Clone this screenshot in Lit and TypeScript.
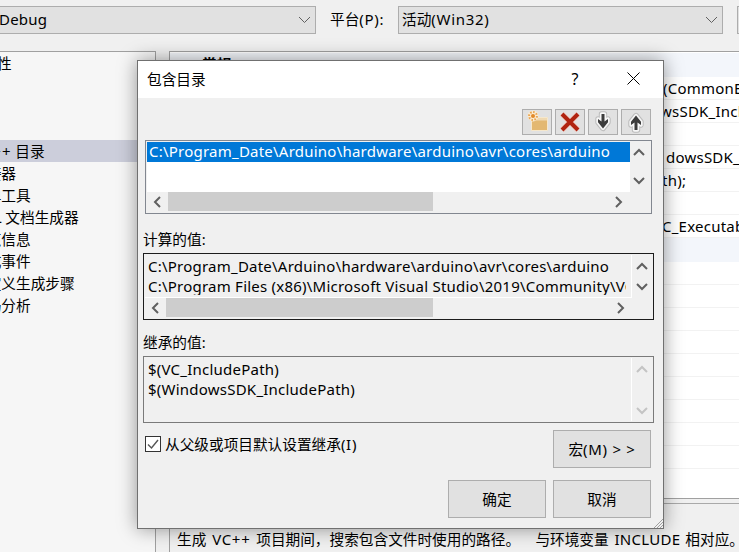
import { LitElement, html, css, svg } from "lit";
import { customElement } from "lit/decorators.js";

const chevron = (dir: "up" | "down" | "left" | "right", dim = false) => {
  const pts = {
    up: "1,7 6,2 11,7",
    down: "1,2 6,7 11,2",
    left: "7,1 2,6 7,11",
    right: "2,1 7,6 2,11",
  }[dir];
  const vertical = dir === "up" || dir === "down";
  return html`<svg class="chev" width=${vertical ? 12 : 9} height=${vertical ? 9 : 12} viewBox=${vertical ? "0 0 12 9" : "0 0 9 12"}>
    <polyline points=${pts} fill="none" stroke=${dim ? "#c4c4c4" : "#606060"} stroke-width="2"></polyline>
  </svg>`;
};

const comboChevron = html`<svg class="chev" width="13" height="8" viewBox="0 0 13 8">
  <polyline points="1,1 6.5,6.5 12,1" fill="none" stroke="#606060" stroke-width="1"></polyline>
</svg>`;

const downArrow = "M7.5 2h3v7.5l3.5-2.5v3.2L9 16.5l-5-6.3V7l3.5 2.5z";

const arrowIcon = (up: boolean) => html`<svg width="18" height="22" viewBox="0 0 18 22">
  <g transform=${up ? "translate(0 21) scale(1 -1)" : "translate(0 1)"}>
    <path d=${downArrow} fill="#bcbcbc" stroke="#bcbcbc" stroke-width="5.4" stroke-linejoin="round"></path>
    <path d=${downArrow} fill="#f6f6f6" stroke="#f6f6f6" stroke-width="3.4" stroke-linejoin="round"></path>
    <path d=${downArrow} fill="#3c3c3c"></path>
  </g>
</svg>`;

const treeRows = [
  { text: html`配置属性`, parent: true, gapBefore: 0 },
  { text: html`<span class="latin tight">VC++</span> 目录`, selected: true, gapBefore: 66 },
  { text: html`链接器` },
  { text: html`清单工具` },
  { text: html`XML 文档生成器` },
  { text: html`浏览信息` },
  { text: html`生成事件` },
  { text: html`自定义生成步骤` },
  { text: html`代码分析` },
];

const VALUE_X = 493;

const gridRows: { kind?: string; text: string; shift?: number }[] = [
  { kind: "header", text: "常规" },
  { text: "(CommonExecutablePath)" },
  { text: "wsSDK_IncludePath);", shift: -3 },
  { text: "" },
  { text: "dowsSDK_LibraryPath", shift: 3 },
  { text: "th);", shift: -1 },
  { text: "" },
  { text: "C_ExecutablePath", shift: -1 },
  { kind: "header", text: "" },
  { text: "" },
  { text: "" },
  { text: "" },
  { text: "" },
  { text: "" },
  { text: "" },
  { text: "" },
  { text: "" },
  { text: "" },
];

@customElement("app-root")
export class AppRoot extends LitElement {
  static styles = css`
    :host {
      display: block;
      position: relative;
      width: 739px;
      height: 552px;
      overflow: hidden;
      background: #f0f0f0;
      color: #000;
      font-family: "Noto Sans", "Noto Sans CJK SC", sans-serif;
      font-size: 14.67px;
      line-height: 20px;
    }
    .latin { font-size: 15px; letter-spacing: 0.23px; }
    .wide { letter-spacing: 0.7px; }
    .tight { letter-spacing: 1px; }
    .vc { margin: 0 2px; }
    .env { margin: 0 1px 0 2px; letter-spacing: 0.3px; }
    .after { margin-left: 8px; }
    .top {
      display: flex;
      align-items: center;
      height: 27px;
      padding-top: 6px;
      margin-left: -9px;
      white-space: nowrap;
    }
    .select {
      flex: none;
      box-sizing: border-box;
      height: 28px;
      display: flex;
      align-items: center;
      justify-content: space-between;
      padding: 0 4px 2px 3px;
      background: #e1e1e1;
      border: 1px solid #adadad;
    }
    .select .chev { margin-top: 2px; }
    .select.config { width: 325px; padding-left: 7px; }
    .select.platform { width: 325px; }
    .plat-label { flex: none; margin: 0 14px; width: 54px; padding-bottom: 2px; }
    .stub { flex: none; width: 40px; height: 28px; box-sizing: border-box; margin-left: 14px; background: #e1e1e1; border: 1px solid #adadad; }
    .panels {
      display: grid;
      grid-template-columns: 156px 1fr;
      column-gap: 13px;
      height: 501px;
      margin-top: 18px;
    }
    .tree {
      background: #f6f6f6;
      border: 1px solid #a0a0a0;
      border-left: none;
      border-bottom: none;
      overflow: hidden;
    }
    .tree-row {
      height: 22px;
      line-height: 22px;
      white-space: nowrap;
    }
    .tree-row > span { display: inline-block; margin-left: -28px; }
    .tree-row.parent > span { margin-left: -47px; }
    .tree-row.selected { background: #cccedb; }
    .detail {
      display: flex;
      flex-direction: column;
      border-left: 1px solid #a0a0a0;
      border-top: 1px solid #a0a0a0;
      min-width: 0;
    }
    .grid {
      height: 446px;
      flex: none;
      background: #fff;
      overflow: hidden;
      padding-top: 1px;
      box-sizing: border-box;
    }
    .g-row {
      height: 23px;
      box-sizing: border-box;
      line-height: 22px;
      border-bottom: 1px solid #f2f2f2;
      white-space: nowrap;
    }
    .g-row.header {
      height: 24px;
      background: #f3f6fb;
      border-bottom: none;
      font-weight: 700;
    }
    .desc {
      flex: 1;
      border-top: 1px solid #a0a0a0;
      padding-top: 4px;
    }
    .desc-inner {
      border-top: 1px solid #a9a9a9;
      padding: 25px 0 0 7px;
      white-space: nowrap;
    }
    .dialog {
      position: absolute;
      left: 137px;
      top: 60px;
      width: 527px;
      height: 469px;
      box-sizing: border-box;
      border: 1px solid #707070;
      background: #f0f0f0;
      box-shadow: 0 0 18px rgba(0, 0, 0, 0.4);
      display: flex;
      flex-direction: column;
    }
    .titlebar {
      height: 37px;
      box-sizing: border-box;
      flex: none;
      background: #fff;
      display: flex;
      align-items: center;
      padding: 0 1px 2px 9px;
    }
    .titlebar .title { flex: 1; }
    .help { width: 58px; text-align: center; font-size: 16px; }
    .close { width: 58px; display: flex; justify-content: center; }
    .body {
      flex: 1;
      padding: 11px 9px 0 5px;
      display: flex;
      flex-direction: column;
    }
    .tools {
      display: flex;
      justify-content: flex-end;
      gap: 3px;
      padding-right: 3px;
    }
    .tool {
      width: 30px;
      height: 26px;
      box-sizing: border-box;
      background: #e1e1e1;
      border: 1px solid #adadad;
      display: flex;
      align-items: center;
      justify-content: center;
    }
    .box {
      box-sizing: border-box;
      border: 1px solid #828790;
      padding: 1px;
      display: grid;
      grid-template-columns: 1fr 20px;
      background: #f0f0f0;
    }
    .box.edit { margin: 5px 2px 0; height: 74px; grid-template-rows: 50px 20px; }
    .box.calc { height: 67px; border-color: #1c1c1c; grid-template-rows: 43px 20px; }
    .box.inherit { height: 67px; border-color: #7a7a7a; grid-template-rows: 63px; }
    .content { overflow: hidden; white-space: nowrap; min-width: 0; }
    .edit .content { background: #fff; }
    .readonly { border-right: 1px solid #fff; border-bottom: 1px solid #fff; padding: 1px 0 0 3px; }
    .readonly div { height: 19.5px; line-height: 20px; overflow: hidden; margin-right: 5px; }
    .inherit .readonly { border-bottom: none; padding-top: 1px; }
    .sel {
      height: 20px;
      line-height: 19px;
      background: #0078d7;
      color: #fff;
      padding-left: 2px;
    }
    .vbar {
      display: flex;
      flex-direction: column;
      justify-content: space-between;
    }
    .calc .vbar { padding: 1px 0 2px; }
    .inherit .vbar { padding: 1px 0; }
    .edit .vbar { padding: 0 0 2px; margin-left: -1px; }
    .arrow { width: 20px; height: 20px; display: flex; align-items: center; justify-content: center; flex: none; }
    .hbar { display: flex; height: 20px; min-width: 0; padding-right: 2px; }
    .thumb { height: 19px; background: #cdcdcd; flex: none; }
    .hbar .spacer { flex: 1; }
    .chev { display: block; }
    .cap {
      height: 20px;
      line-height: 20px;
      margin: 15px 0 4px;
    }
    .cap.second { margin-top: 12px; }
    .macro-row {
      display: flex;
      justify-content: space-between;
      align-items: flex-start;
      margin-top: 7px;
      padding: 0 3px 0 2px;
    }
    .check { display: flex; align-items: center; gap: 4px; margin-top: 6px; height: 16px; line-height: 15px; }
    .box-check {
      width: 16px;
      height: 16px;
      box-sizing: border-box;
      border: 1px solid #333;
      background: #fff;
      display: flex;
      align-items: center;
      justify-content: center;
    }
    .btn {
      width: 98px;
      height: 38px;
      box-sizing: border-box;
      background: #e1e1e1;
      border: 1px solid #adadad;
      display: flex;
      align-items: center;
      justify-content: center;
      white-space: pre;
    }
    .footer {
      display: flex;
      justify-content: flex-end;
      gap: 7px;
      margin-top: 12px;
      padding-right: 3px;
    }
    .grip { position: absolute; right: 0; bottom: 0; display: block; }
  `;

  private hbar(thumb: number) {
    return html`<div class="hbar">
      <div class="arrow">${chevron("left")}</div>
      <div class="thumb" style="width:${thumb}px;margin-left:1px"></div>
      <div class="spacer"></div>
      <div class="arrow">${chevron("right")}</div>
    </div>`;
  }

  render() {
    return html`
      <div class="top">
        <div class="select config"><span class="latin">Debug</span>${comboChevron}</div>
        <div class="plat-label">平台<span class="latin wide">(P):</span></div>
        <div class="select platform"><span>活动<span class="latin wide">(Win32)</span></span>${comboChevron}</div>
        <div class="stub"></div>
      </div>
      <div class="panels">
        <div class="tree">
          ${treeRows.map(
            (r) => html`<div
              class="tree-row ${r.parent ? "parent" : ""} ${r.selected ? "selected" : ""}"
              style=${r.gapBefore ? `margin-top:${r.gapBefore}px` : ""}
            ><span>${r.text}</span></div>`
          )}
        </div>
        <div class="detail">
          <div class="grid">
            ${gridRows.map(
              (r) => html`<div
                class="g-row ${r.kind === "header" ? "header" : "latin"}"
                style="padding-left:${r.kind === "header" ? 32 : VALUE_X + (r.shift ?? 0)}px"
              >${r.text}</div>`
            )}
          </div>
          <div class="desc">
            <div class="desc-inner">生成 <span class="latin wide vc">VC++</span> 项目期间，搜索包含文件时使用的路径。\u3000<span class="after">与环境变量</span> <span class="latin env">INCLUDE</span> 相对应。</div>
          </div>
        </div>
      </div>

      <div class="dialog">
        <div class="titlebar">
          <div class="title">包含目录</div>
          <div class="help">?</div>
          <div class="close">
            <svg width="13" height="13" viewBox="0 0 13 13"><path d="M.5.5l12 12M12.5.5l-12 12" stroke="#000" fill="none"></path></svg>
          </div>
        </div>
        <div class="body">
          <div class="tools">
            <div class="tool">
              <svg width="26" height="24" viewBox="0 0 26 24">
                <path d="M7.5 7.5h16v13h-16z" fill="#e3b871" stroke="#f6e8cd"></path>
                <path d="M8 8h15v2.5H8z" fill="#efd9b2"></path>
                <circle cx="9" cy="6" r="5.4" fill="#f9ecd4"></circle>
                <circle cx="9" cy="6" r="3.9" fill="none" stroke="#eaa552" stroke-width="2" stroke-dasharray="1.6 1.4"></circle>
                <circle cx="9" cy="6" r="2" fill="#e38a27"></circle>
              </svg>
            </div>
            <div class="tool">
              <svg width="24" height="24" viewBox="0 0 24 24">
                <path d="M4 4l16 16M20 4L4 20" stroke="#ecd6cf" stroke-width="6.4" fill="none"></path>
                <path d="M4 4l16 16M20 4L4 20" stroke="#b1230f" stroke-width="4" fill="none"></path>
              </svg>
            </div>
            <div class="tool">${arrowIcon(false)}</div>
            <div class="tool">${arrowIcon(true)}</div>
          </div>
          <div class="box edit">
            <div class="content">
              <div class="sel latin">C:\\Program_Date\\Arduino\\hardware\\arduino\\avr\\cores\\arduino</div>
            </div>
            <div class="vbar">
              <div class="arrow">${chevron("up")}</div>
              <div class="arrow">${chevron("down")}</div>
            </div>
            ${this.hbar(265)}
          </div>
          <div class="cap">计算的值:</div>
          <div class="box calc">
            <div class="content readonly">
              <div class="latin">C:\\Program_Date\\Arduino\\hardware\\arduino\\avr\\cores\\arduino</div>
              <div class="latin">C:\\Program Files (x86)\\Microsoft Visual Studio\\2019\\Community\\VC</div>
            </div>
            <div class="vbar">
              <div class="arrow">${chevron("up")}</div>
              <div class="arrow">${chevron("down")}</div>
            </div>
            ${this.hbar(267)}
          </div>
          <div class="cap second">继承的值:</div>
          <div class="box inherit">
            <div class="content readonly">
              <div class="latin">$(VC_IncludePath)</div>
              <div class="latin">$(WindowsSDK_IncludePath)</div>
            </div>
            <div class="vbar">
              <div class="arrow">${chevron("up", true)}</div>
              <div class="arrow">${chevron("down", true)}</div>
            </div>
          </div>
          <div class="macro-row">
            <div class="check">
              <div class="box-check">
                <svg width="12" height="12" viewBox="0 0 12 12"><path d="M1 6.5l3.5 3.5L11 2" stroke="#555" stroke-width="1.4" fill="none"></path></svg>
              </div>
              <span>从父级或项目默认设置继承<span class="latin wide">(I)</span></span>
            </div>
            <div class="btn">宏<span class="latin wide">(M) &gt; &gt;</span></div>
          </div>
          <div class="footer">
            <div class="btn">确定</div>
            <div class="btn">取消</div>
          </div>
        </div>
        <svg class="grip" width="12" height="12" viewBox="0 0 12 12">
          ${[3, 6, 9, 12].map((n) => svg`<path d="M${n} 12L12 ${n}" stroke="#a0a0a0" fill="none"></path>`)}
        </svg>
      </div>
    `;
  }
}
